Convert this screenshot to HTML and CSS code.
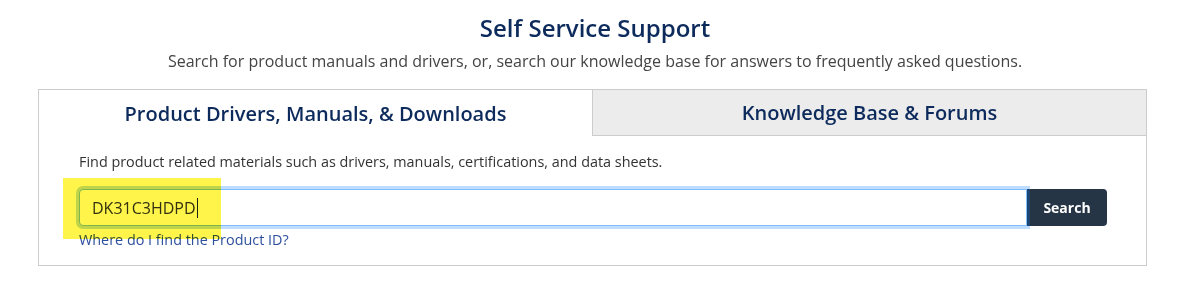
FILE: index.html
```html
<!DOCTYPE html>
<html>
<head>
<meta charset="utf-8">
<link rel="stylesheet" href="styles.css">
</head>
<body>
<div class="page">
  <h1 class="title">Self Service Support</h1>
  <p class="subtitle">Search for product manuals and drivers, or, search our knowledge base for answers to frequently asked questions.</p>
  <div class="box">
    <div class="tabs">
      <div class="tab active">Product Drivers, Manuals, &amp; Downloads</div>
      <div class="tab">Knowledge Base &amp; Forums</div>
    </div>
    <div class="panel">
      <p class="hint">Find product related materials such as drivers, manuals, certifications, and data sheets.</p>
      <div class="search-row">
        <div class="input-wrap">
          <div class="input"><span class="value">DK31C3HDPD</span><span class="caret"></span></div>
          <div class="highlight"></div>
        </div>
        <button class="btn">Search</button>
      </div>
      <a class="link" href="#">Where do I find the Product ID?</a>
    </div>
  </div>
</div>
</body>
</html>
```
FILE: styles.css
```css
html, body {
  margin: 0;
  padding: 0;
  background: #fff;
}
body {
  font-family: "Open Sans", "Liberation Sans", sans-serif;
  color: #333;
}
.page {
  width: 1190px;
  padding-top: 12px;
}
.title {
  margin: 0;
  text-align: center;
  font-size: 24px;
  font-weight: 600;
  line-height: 32px;
  color: #0c2a5b;
}
.subtitle {
  margin: 7px 0 0;
  text-align: center;
  font-size: 16px;
  line-height: 20px;
  color: #444;
}
.box {
  margin: 18px 0 0 38px;
  width: 1109px;
  box-sizing: border-box;
  border: 1px solid #ccc;
}
.tabs {
  display: flex;
  height: 46px;
}
.tab {
  flex: 1;
  display: flex;
  align-items: center;
  justify-content: center;
  font-size: 20px;
  font-weight: 600;
  color: #0c2a5b;
  background: #ececec;
  border-left: 1px solid #ccc;
  border-bottom: 1px solid #ccc;
}
.tab.active {
  background: #fff;
  border: none;
}
.panel {
  padding: 16px 39px 15px 40px;
}
.hint {
  margin: 0;
  font-size: 14.4px;
  line-height: 20px;
  color: #333;
}
.search-row {
  display: flex;
  margin-top: 17px;
  height: 37px;
}
.input-wrap {
  position: relative;
  flex: 1;
  display: flex;
}
.input {
  flex: 1;
  box-sizing: border-box;
  border: 1px solid #80bdff;
  border-radius: 4px 0 0 4px;
  box-shadow: 0 0 0 3px rgba(0, 123, 255, 0.25);
  display: flex;
  align-items: center;
  padding-left: 12px;
  font-size: 16px;
  color: #333;
  background: #fff;
}
.caret {
  display: inline-block;
  width: 1px;
  height: 20px;
  background: #222;
  margin-left: 1px;
}
.highlight {
  position: absolute;
  left: -16px;
  top: -11px;
  width: 158px;
  height: 61px;
  background: #fff44a;
  mix-blend-mode: multiply;
  pointer-events: none;
}
.btn {
  width: 80px;
  border: none;
  border-radius: 0 4px 4px 0;
  background: #253545;
  color: #fff;
  font-family: "Open Sans", "Liberation Sans", sans-serif;
  font-size: 14px;
  font-weight: 700;
  padding: 0;
}
.link {
  display: block;
  margin-top: 4px;
  font-size: 14.4px;
  line-height: 20px;
  color: #2d4f9e;
  text-decoration: none;
}
```
